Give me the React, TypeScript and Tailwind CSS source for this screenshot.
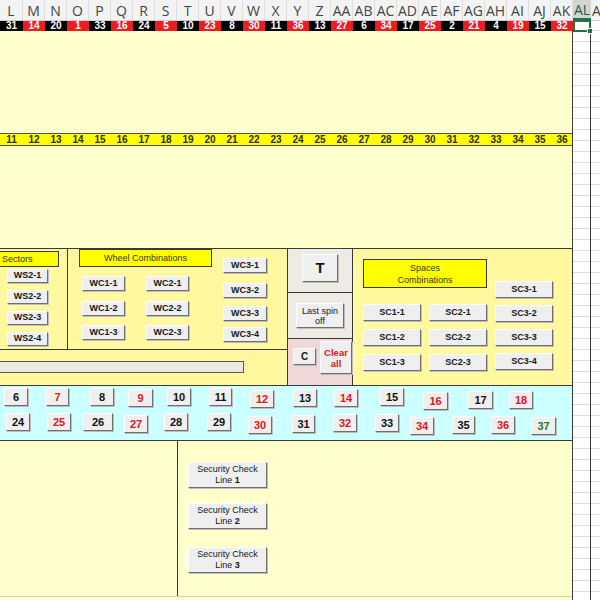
import { twMerge } from "tailwind-merge";

const cols = ["L", "M", "N", "O", "P", "Q", "R", "S", "T", "U", "V", "W", "X", "Y", "Z", "AA", "AB", "AC", "AD", "AE", "AF", "AG", "AH", "AI", "AJ", "AK"];
const spin = [31, 14, 20, 1, 33, 16, 24, 5, 10, 23, 8, 30, 11, 36, 13, 27, 6, 34, 17, 25, 2, 21, 4, 19, 15, 32];
const reds = new Set([1, 3, 5, 7, 9, 12, 14, 16, 18, 19, 21, 23, 25, 27, 30, 32, 34, 36]);

// hand placed, the sheet buttons are not on a grid
const row1 = [
    { n: 6, c: "ml-[4px] mt-[2px] w-[24px]" },
    { n: 7, c: "ml-[18px] mt-[2px] w-[23px]" },
    { n: 8, c: "ml-[21px] mt-[2px] w-[24px]" },
    { n: 9, c: "ml-[14px] mt-[3px] w-[25px]" },
    { n: 10, c: "ml-[14px] mt-[2px] w-[24px]" },
    { n: 11, c: "ml-[18px] mt-[2px] w-[23px]" },
    { n: 12, c: "ml-[18px] mt-[4px] w-[24px]" },
    { n: 13, c: "ml-[19px] mt-[3px] w-[24px]" },
    { n: 14, c: "ml-[17px] mt-[3px] w-[24px]" },
    { n: 15, c: "ml-[22px] mt-[2px] w-[24px]" },
    { n: 16, c: "ml-[19px] mt-[6px] w-[25px]" },
    { n: 17, c: "ml-[20px] mt-[5px] w-[25px]" },
    { n: 18, c: "ml-[16px] mt-[5px] w-[24px]" },
];
const row2 = [
    { n: 24, c: "ml-[6px] mt-[2px] w-[24px]" },
    { n: 25, c: "ml-[17px] mt-[2px] w-[24px]" },
    { n: 26, c: "ml-[12px] mt-[2px] w-[30px]" },
    { n: 27, c: "ml-[11px] mt-[4px] w-[24px]" },
    { n: 28, c: "ml-[16px] mt-[2px] w-[24px]" },
    { n: 29, c: "ml-[19px] mt-[2px] w-[24px]" },
    { n: 30, c: "ml-[17px] mt-[5px] w-[24px]" },
    { n: 31, c: "ml-[20px] mt-[4px] w-[23px]" },
    { n: 32, c: "ml-[18px] mt-[3px] w-[24px]" },
    { n: 33, c: "ml-[18px] mt-[3px] w-[24px]" },
    { n: 34, c: "ml-[11px] mt-[6px] w-[24px]" },
    { n: 35, c: "ml-[18px] mt-[5px] w-[23px]" },
    { n: 36, c: "ml-[16px] mt-[5px] w-[24px]" },
    { n: 37, c: "ml-[16px] mt-[6px] w-[25px]" },
];

function Btn({ className, children }: { className?: string; children: React.ReactNode }) {
    return (
        <div
            className={twMerge(
                "shrink-0 flex items-center justify-center text-center bg-[#efefef] border border-t-[#fdfdfd] border-l-[#fdfdfd] border-r-[#6f6f6f] border-b-[#6f6f6f] shadow-[1px_1px_0_#bdbdbd] leading-none font-bold text-[9px] text-[#161616]",
                className
            )}
        >
            {children}
        </div>
    );
}

function Label({ className, children }: { className?: string; children: React.ReactNode }) {
    return (
        <div className={twMerge("shrink-0 flex items-center justify-center bg-[#ffff00] border border-[#3a3a3a] text-[9px] text-[#333] leading-[12px] text-center", className)}>
            {children}
        </div>
    );
}

function numColor(n: number) {
    if (n === 37) return "text-[#1d7a22]";
    return reds.has(n) ? "text-[#e0141c]" : "text-[#111]";
}

function GridCol({ className }: { className?: string }) {
    return (
        <div className={twMerge("flex flex-col bg-white overflow-hidden", className)}>
            {Array.from({ length: 52 }).map((_, i) => (
                <div key={i} className="h-[11px] shrink-0 border-b border-[#dcdcdc]" />
            ))}
        </div>
    );
}

export default function App() {
    return (
        <div className="w-[600px] h-[600px] overflow-hidden bg-white font-['Liberation_Sans',Arial,sans-serif]">
            {/* column letters */}
            <div className="flex h-[21px] bg-[#f3f3f3] border-b border-[#d0d0d0] font-['Open_Sans',sans-serif] text-[14px] text-[#444]">
                {cols.map((c, i) => (
                    <div key={c} className={`${i === 0 ? "w-[23px]" : "w-[22px]"} shrink-0 flex items-center justify-center border-r border-[#dedede]`}>
                        {c}
                    </div>
                ))}
                <div className="w-[18px] shrink-0 flex items-center justify-center overflow-hidden bg-[#d4d4d4] border-b-2 border-[#217346] text-[#1e5e38]">
                    AL
                </div>
                <div className="flex-1 overflow-hidden whitespace-nowrap flex items-center pl-[1px]">AM</div>
            </div>

            {/* last spins row */}
            <div className="flex h-[10px] text-[10px] font-bold text-white leading-none">
                {spin.map((n, i) => (
                    <div key={i} className={`${i === 0 ? "w-[23px]" : "w-[22px]"} shrink-0 flex items-center justify-center ${i % 2 === 0 ? "bg-black" : "bg-[#ec1c24]"}`}>
                        {n}
                    </div>
                ))}
                <div className="relative z-10 w-[18px] h-[12px] -mt-[1px] shrink-0 bg-white border-2 border-[#217346]">
                    <div className="absolute -right-[4px] -bottom-[4px] w-[6px] h-[6px] bg-[#217346] border border-white" />
                </div>
                <div className="flex-1 bg-white border-b border-[#dcdcdc]" />
            </div>

            <div className="flex h-[569px]">
                <div className="w-[573px] shrink-0 border-r border-[#3a3a3a] flex flex-col">
                    <div className="h-[102px] shrink-0 bg-[#ffffcc]" />

                    {/* number strip */}
                    <div className="h-[13px] shrink-0 flex bg-[#ffff00] border-y border-[#555] text-[10px] font-bold text-[#2a2a2a] leading-none overflow-hidden">
                        {spin.map((_, i) => (
                            <div key={i} className={`${i === 0 ? "w-[23px]" : "w-[22px]"} shrink-0 flex items-center justify-center`}>
                                {i + 11}
                            </div>
                        ))}
                    </div>

                    <div className="h-[102px] shrink-0 bg-[#ffffcc]" />

                    {/* control panel */}
                    <div className="h-[137px] shrink-0 flex border-t border-[#3a3a3a] bg-[#fff89e]">
                        <div className="w-[287px] shrink-0 flex flex-col">
                            <div className="h-[100px] shrink-0 flex">
                                {/* sectors */}
                                <div className="w-[68px] shrink-0 flex flex-col border-r border-[#3a3a3a]">
                                    <Label className="mt-[2px] w-[59px] h-[16px] border-l-0 justify-start pl-[2px]">Sectors</Label>
                                    <Btn className="ml-[7px] mt-[2px] w-[41px] h-[14px]">WS2-1</Btn>
                                    <Btn className="ml-[7px] mt-[7px] w-[41px] h-[14px]">WS2-2</Btn>
                                    <Btn className="ml-[7px] mt-[7px] w-[41px] h-[14px]">WS2-3</Btn>
                                    <Btn className="ml-[7px] mt-[7px] w-[41px] h-[14px]">WS2-4</Btn>
                                </div>
                                {/* wheel combinations */}
                                <div className="flex-1 flex">
                                    <div className="w-[145px] shrink-0 flex flex-col">
                                        <Label className="ml-[11px] w-[133px] h-[18px]">Wheel Combinations</Label>
                                        <div className="flex mt-[9px]">
                                            <div className="ml-[14px] flex flex-col">
                                                <Btn className="w-[43px] h-[15px]">WC1-1</Btn>
                                                <Btn className="mt-[10px] w-[43px] h-[15px]">WC1-2</Btn>
                                                <Btn className="mt-[9px] w-[43px] h-[15px]">WC1-3</Btn>
                                            </div>
                                            <div className="ml-[21px] flex flex-col">
                                                <Btn className="w-[43px] h-[15px]">WC2-1</Btn>
                                                <Btn className="mt-[10px] w-[43px] h-[15px]">WC2-2</Btn>
                                                <Btn className="mt-[9px] w-[43px] h-[15px]">WC2-3</Btn>
                                            </div>
                                        </div>
                                    </div>
                                    <div className="ml-[10px] pt-[9px] flex flex-col">
                                        <Btn className="w-[44px] h-[15px]">WC3-1</Btn>
                                        <Btn className="mt-[10px] w-[44px] h-[15px]">WC3-2</Btn>
                                        <Btn className="mt-[8px] w-[44px] h-[15px]">WC3-3</Btn>
                                        <Btn className="mt-[6px] w-[44px] h-[15px]">WC3-4</Btn>
                                    </div>
                                </div>
                            </div>
                            <div className="flex-1 border-t border-[#3a3a3a]">
                                <div className="mt-[11px] w-[244px] h-[12px] bg-[#ece9e1] border border-l-0 border-[#555]" />
                            </div>
                        </div>

                        {/* T / last spin / clear */}
                        <div className="w-[66px] shrink-0 flex flex-col border-x border-[#3a3a3a]">
                            <div className="h-[44px] shrink-0 flex justify-center pt-[5px] bg-[#eeebe4] border-b border-[#3a3a3a]">
                                <Btn className="w-[36px] h-[28px] text-[15px]">T</Btn>
                            </div>
                            <div className="h-[46px] shrink-0 flex justify-center pt-[10px] bg-[#eeebe4] border-b border-[#3a3a3a]">
                                <Btn className="w-[48px] h-[25px] font-normal text-[9px] leading-[10px]">
                                    Last spin
                                    <br />
                                    off
                                </Btn>
                            </div>
                            <div className="flex-1 flex items-start bg-[#f0d8d9]">
                                <Btn className="ml-[5px] mt-[9px] w-[23px] h-[17px] text-[10px]">C</Btn>
                                <Btn className="ml-[4px] mt-[2px] w-[32px] h-[33px] text-[9.5px] leading-[11px] text-[#e0141c]">
                                    Clear
                                    <br />
                                    all
                                </Btn>
                            </div>
                        </div>

                        {/* spaces combinations */}
                        <div className="flex-1 flex">
                            <div className="w-[134px] shrink-0 flex flex-col pt-[10px]">
                                <Label className="ml-[10px] w-[124px] h-[29px]">
                                    Spaces
                                    <br />
                                    Combinations
                                </Label>
                                <div className="flex mt-[16px]">
                                    <Btn className="ml-[10px] w-[58px] h-[17px]">SC1-1</Btn>
                                    <Btn className="ml-[8px] w-[58px] h-[17px]">SC2-1</Btn>
                                </div>
                                <div className="flex mt-[8px]">
                                    <Btn className="ml-[10px] w-[58px] h-[17px]">SC1-2</Btn>
                                    <Btn className="ml-[8px] w-[58px] h-[17px]">SC2-2</Btn>
                                </div>
                                <div className="flex mt-[8px]">
                                    <Btn className="ml-[10px] w-[58px] h-[17px]">SC1-3</Btn>
                                    <Btn className="ml-[8px] w-[58px] h-[17px]">SC2-3</Btn>
                                </div>
                            </div>
                            <div className="ml-[8px] pt-[32px] flex flex-col">
                                <Btn className="w-[58px] h-[17px]">SC3-1</Btn>
                                <Btn className="mt-[7px] w-[58px] h-[17px]">SC3-2</Btn>
                                <Btn className="mt-[7px] w-[58px] h-[17px]">SC3-3</Btn>
                                <Btn className="mt-[7px] w-[58px] h-[17px]">SC3-4</Btn>
                            </div>
                        </div>
                    </div>

                    {/* number buttons */}
                    <div className="h-[56px] shrink-0 flex flex-col bg-[#ccffff] border-y border-[#3a3a3a]">
                        <div className="h-[25px] shrink-0 flex items-start">
                            {row1.map((b) => (
                                <Btn key={b.n} className={twMerge("h-[18px] text-[11px]", b.c, numColor(b.n))}>
                                    {b.n}
                                </Btn>
                            ))}
                        </div>
                        <div className="flex items-start">
                            {row2.map((b) => (
                                <Btn key={b.n} className={twMerge("h-[18px] text-[11px]", b.c, numColor(b.n))}>
                                    {b.n}
                                </Btn>
                            ))}
                        </div>
                    </div>

                    {/* security checks */}
                    <div className="h-[156px] shrink-0 flex bg-[#ffffcc] border-b border-[#cfcfb8]">
                        <div className="w-[178px] shrink-0 border-r border-[#3a3a3a]" />
                        <div className="flex flex-col">
                            {[1, 2, 3].map((n) => (
                                <Btn
                                    key={n}
                                    className={`ml-[10px] w-[79px] h-[26px] font-normal text-[9px] leading-[11px] ${n === 1 ? "mt-[21px]" : n === 2 ? "mt-[15px]" : "mt-[18px]"}`}
                                >
                                    <span>
                                        Security Check
                                        <br />
                                        Line <b>{n}</b>
                                    </span>
                                </Btn>
                            ))}
                        </div>
                    </div>
                    <div className="flex-1 bg-[#ffffcc]" />
                </div>

                <GridCol className="w-[18px] shrink-0 border-r border-[#3a3a3a]" />
                <GridCol className="flex-1" />
            </div>
        </div>
    );
}
